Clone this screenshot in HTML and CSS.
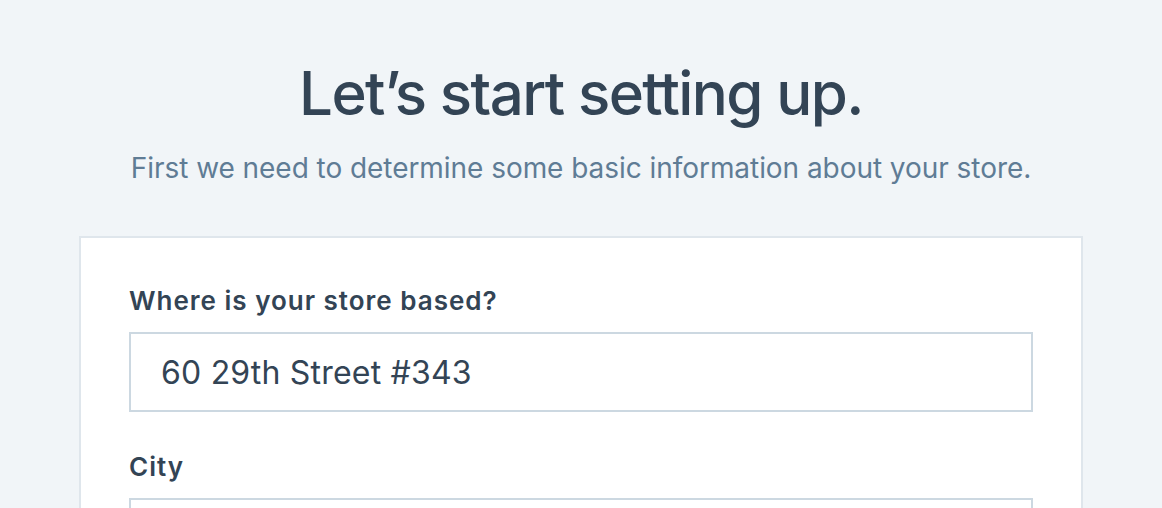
FILE: index.html
```html
<!DOCTYPE html>
<html>
  <head>
    <title>Store setup</title>
    <link rel="stylesheet" href="styles.css">
  </head>

  <body>
    <div class="setup">
      <div class="setup-header">
        <h1>Let’s start setting up.</h1>
        <p>First we need to determine some basic information about your store.</p>
      </div>

      <form class="card">
        <div class="field">
          <label for="address">Where is your store based?</label>
          <input id="address" type="text" value="60 29th Street #343" />
        </div>
        <div class="field">
          <label for="city">City</label>
          <input id="city" type="text" />
        </div>
      </form>
    </div>
  </body>
</html>
```

FILE: styles.css
```css
body {
  font-family: Inter, "Noto Sans", sans-serif;
  background-color: #f1f5f8;
  color: #334455;
  margin: 0;
}

.setup {
  width: 1004px;
  margin: 0 auto;
  padding-top: 57px;
}

.setup-header {
  text-align: center;
  margin-bottom: 51px;
}

.setup-header h1 {
  font-size: 60px;
  font-weight: 500;
  letter-spacing: -1.6px;
  line-height: 72px;
  margin: 0;
}

.setup-header p {
  color: #5f7c95;
  font-size: 28px;
  letter-spacing: -0.05px;
  line-height: 34px;
  margin: 22px 0 0;
}

.card {
  background: white;
  border: 2px solid #dfe6ec;
  padding: 48px;
  box-sizing: border-box;
}

.field {
  display: flex;
  flex-direction: column;
  margin-bottom: 40px;
}

.field label {
  font-size: 26px;
  font-weight: 600;
  letter-spacing: 1px;
  line-height: 30px;
  margin-bottom: 16px;
}

.field input {
  font-family: inherit;
  font-size: 32px;
  letter-spacing: 0.2px;
  color: #334455;
  height: 80px;
  padding: 0 30px;
  border: 2px solid #ccd8e1;
  box-sizing: border-box;
  outline: none;
}
```
